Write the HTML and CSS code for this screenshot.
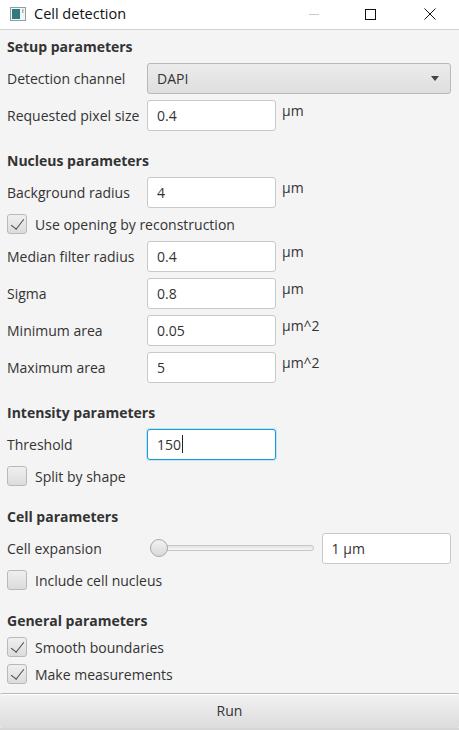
FILE: index.html
```html
<!DOCTYPE html>
<html lang="en">
  <head>
    <meta charset="UTF-8" />
    <meta name="viewport" content="width=device-width, initial-scale=1.0" />
    <title>Cell detection</title>
    <link rel="stylesheet" href="styles.css">
  </head>
  <body>
    <div class="window">
      <div class="titlebar">
        <svg class="app-icon" width="16" height="14" viewBox="0 0 16 14">
          <rect x="0.5" y="0.5" width="15" height="13" fill="#f4f6f6" stroke="#8f9ea3" />
          <rect x="2" y="2" width="8" height="10" fill="#2f7a7c" />
          <rect x="12" y="2" width="1.5" height="4" fill="#a9b4b7" />
        </svg>
        <span class="title">Cell detection</span>
        <div class="controls">
          <span class="ctl minimize"></span>
          <span class="ctl maximize"></span>
          <svg class="ctl close" width="12" height="12" viewBox="0 0 12 12">
            <path d="M0.5 0.5 L11.5 11.5 M11.5 0.5 L0.5 11.5" stroke="#111" stroke-width="1" />
          </svg>
        </div>
      </div>

      <div class="form">
        <div class="section">
          <h2>Setup parameters</h2>
          <div class="row">
            <span class="label">Detection channel</span>
            <div class="combo">
              <span>DAPI</span>
              <span class="arrow"></span>
            </div>
          </div>
          <div class="row">
            <span class="label">Requested pixel size</span>
            <div class="field">0.4</div>
            <span class="unit">µm</span>
          </div>
        </div>

        <div class="section">
          <h2>Nucleus parameters</h2>
          <div class="row">
            <span class="label">Background radius</span>
            <div class="field">4</div>
            <span class="unit">µm</span>
          </div>
          <label class="check">
            <span class="box checked"></span>
            <span>Use opening by reconstruction</span>
          </label>
          <div class="row">
            <span class="label">Median filter radius</span>
            <div class="field">0.4</div>
            <span class="unit">µm</span>
          </div>
          <div class="row">
            <span class="label">Sigma</span>
            <div class="field">0.8</div>
            <span class="unit">µm</span>
          </div>
          <div class="row">
            <span class="label">Minimum area</span>
            <div class="field">0.05</div>
            <span class="unit">µm^2</span>
          </div>
          <div class="row">
            <span class="label">Maximum area</span>
            <div class="field">5</div>
            <span class="unit">µm^2</span>
          </div>
        </div>

        <div class="section">
          <h2>Intensity parameters</h2>
          <div class="row">
            <span class="label">Threshold</span>
            <div class="field focused">150<span class="caret"></span></div>
          </div>
          <label class="check">
            <span class="box"></span>
            <span>Split by shape</span>
          </label>
        </div>

        <div class="section">
          <h2>Cell parameters</h2>
          <div class="row">
            <span class="label">Cell expansion</span>
            <div class="slider">
              <span class="track"></span>
              <span class="thumb"></span>
            </div>
            <div class="field wide">1 µm</div>
          </div>
          <label class="check">
            <span class="box"></span>
            <span>Include cell nucleus</span>
          </label>
        </div>

        <div class="section">
          <h2>General parameters</h2>
          <label class="check">
            <span class="box checked"></span>
            <span>Smooth boundaries</span>
          </label>
          <label class="check">
            <span class="box checked"></span>
            <span>Make measurements</span>
          </label>
        </div>
      </div>

      <button class="run">Run</button>
    </div>
  </body>
</html>
```

FILE: styles.css
```css
body {
  margin: 0;
  font-family: "Open Sans", "Noto Sans", sans-serif;
  font-size: 14px;
  color: #333;
  background-color: #f4f4f4;
}

.window {
  display: flex;
  flex-direction: column;
  height: 100vh;
  box-sizing: border-box;
  border-bottom: 2px solid #d6d6d6;
}

.titlebar {
  display: flex;
  align-items: center;
  height: 29px;
  background-color: #fff;
  border-bottom: 1px solid #d2d2d2;
  padding-left: 10px;
}

.app-icon {
  margin-right: 8px;
}

.title {
  font-size: 14.5px;
  color: #111;
  flex: 1;
  margin-top: -2px;
}

.controls {
  display: flex;
  align-items: center;
  height: 100%;
}

.ctl {
  display: block;
}

.minimize {
  width: 10px;
  border-top: 1px solid #c9c9c9;
  margin-right: 46px;
}

.maximize {
  width: 9px;
  height: 9px;
  border: 1px solid #111;
  margin-right: 48px;
}

.close {
  margin-right: 23px;
}

.form {
  flex: 1;
  padding: 7px 8px 0 7px;
}

.section {
  display: flex;
  flex-direction: column;
  gap: 6px;
  margin-bottom: 20px;
}

.section:last-child {
  margin-bottom: 0;
}

h2 {
  margin: 0;
  font-size: 14px;
  font-weight: 700;
  height: 20px;
  line-height: 20px;
}

.row {
  display: flex;
  align-items: center;
  height: 31px;
}

.label {
  width: 140px;
  flex-shrink: 0;
}

.field {
  width: 129px;
  height: 31px;
  box-sizing: border-box;
  padding: 0 9px;
  display: flex;
  align-items: center;
  background-color: #fff;
  border: 1px solid #c9c9c9;
  border-radius: 3px;
  color: #333;
}

.field.wide {
  width: 131px;
}

.field.focused {
  border-color: #1b9ad6;
  box-shadow: 0 0 0 1px #bfe4f6;
}

.caret {
  display: inline-block;
  width: 1px;
  height: 18px;
  background-color: #222;
  margin-left: 1px;
}

.unit {
  align-self: flex-start;
  margin-left: 6px;
  margin-top: 1px;
}

.combo {
  flex: 1;
  height: 31px;
  box-sizing: border-box;
  display: flex;
  align-items: center;
  justify-content: space-between;
  padding: 0 11px 0 9px;
  border: 1px solid #b8b8b8;
  border-radius: 3px;
  background: linear-gradient(#ececec, #dedede);
}

.arrow {
  width: 0;
  height: 0;
  border-left: 4px solid transparent;
  border-right: 4px solid transparent;
  border-top: 5px solid #444;
}

.check {
  display: flex;
  align-items: center;
  gap: 8px;
  height: 21px;
}

.box {
  width: 20px;
  height: 20px;
  box-sizing: border-box;
  border: 1px solid #b9b9b9;
  border-radius: 3px;
  background: linear-gradient(#efefef, #dcdcdc);
  position: relative;
}

.box.checked::after {
  content: "";
  position: absolute;
  left: 6px;
  top: 1px;
  width: 6px;
  height: 12px;
  border-right: 1.5px solid #474747;
  border-bottom: 1.5px solid #474747;
  transform: rotate(38deg);
}

.slider {
  width: 166px;
  height: 20px;
  margin-left: 3px;
  margin-right: 8px;
  position: relative;
  display: flex;
  align-items: center;
}

.track {
  display: block;
  width: 100%;
  height: 6px;
  border: 1px solid #c6c6c6;
  border-radius: 4px;
  background: linear-gradient(#e2e2e2, #f6f6f6);
  box-sizing: border-box;
}

.thumb {
  position: absolute;
  left: 0;
  top: 1px;
  width: 18px;
  height: 18px;
  box-sizing: border-box;
  border: 1px solid #a9a9a9;
  border-radius: 50%;
  background: linear-gradient(#f2f2f2, #d9d9d9);
}

.run {
  height: 36px;
  margin-top: 8px;
  width: 100%;
  font-family: inherit;
  font-size: 14px;
  color: #333;
  border: none;
  border-top: 1px solid #b8b8b8;
  border-radius: 2px;
  background: linear-gradient(#f2f2f2, #dcdcdc);
  box-shadow: inset 0 1px 0 #fff;
}
```
